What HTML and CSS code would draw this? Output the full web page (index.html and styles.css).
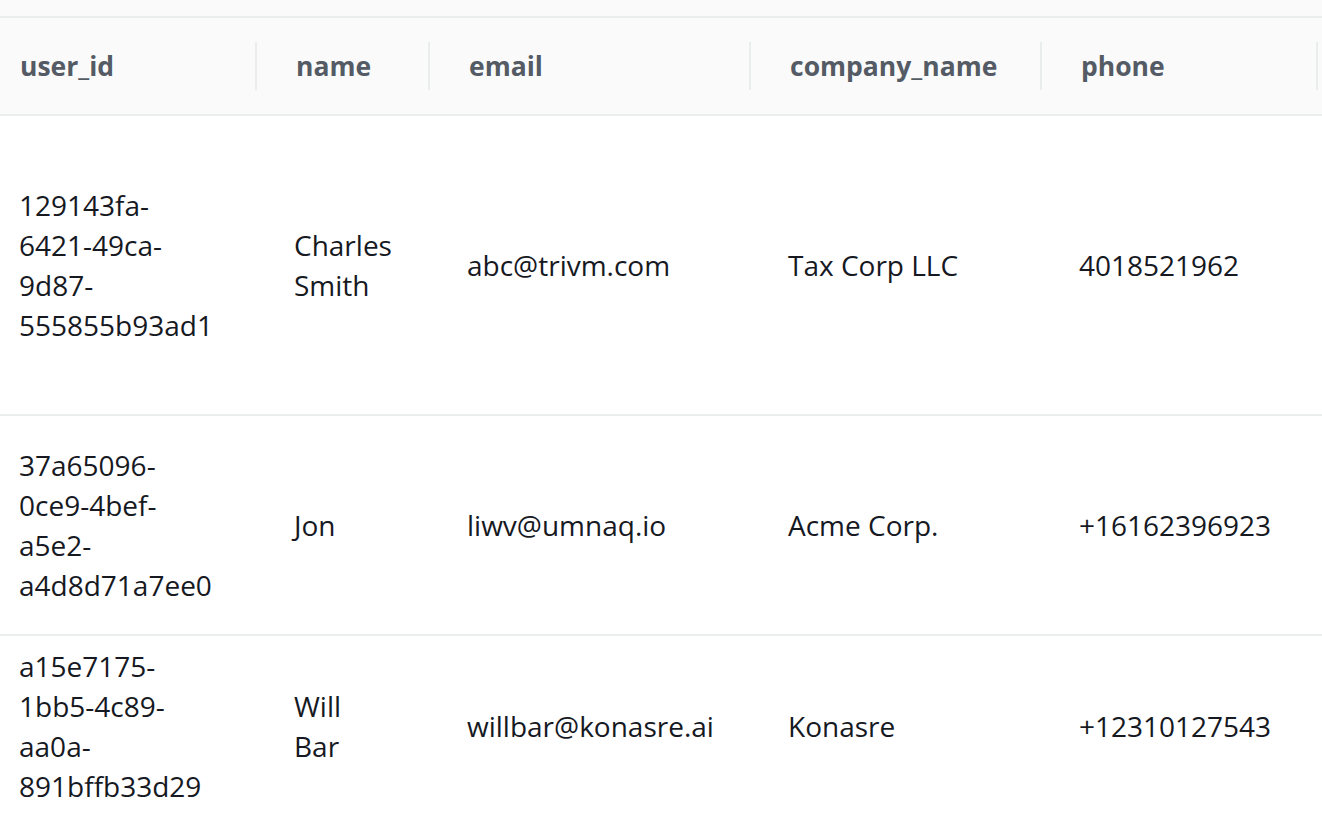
FILE: index.html
```html
<!DOCTYPE html>
<html lang="en">
<head>
<meta charset="utf-8">
<title>Users table</title>
<link rel="stylesheet" href="styles.css">
</head>
<body>
<div class="table-wrap">
  <div class="top-strip"></div>
  <div class="row head">
    <div class="th first"><span>user_id</span></div>
    <div class="th"><span>name</span></div>
    <div class="th"><span>email</span></div>
    <div class="th"><span>company_name</span></div>
    <div class="th"><span>phone</span></div>
    <div class="th"><span></span></div>
  </div>
  <div class="row body r1">
    <div class="td first"><span class="id">129143fa-6421-49ca-9d87-555855b93ad1</span></div>
    <div class="td"><span class="nm">Charles Smith</span></div>
    <div class="td">abc@trivm.com</div>
    <div class="td">Tax Corp LLC</div>
    <div class="td">4018521962</div>
    <div class="td"></div>
  </div>
  <div class="row body r2">
    <div class="td first"><span class="id">37a65096-0ce9-4bef-a5e2-a4d8d71a7ee0</span></div>
    <div class="td"><span class="nm">Jon</span></div>
    <div class="td">liwv@umnaq.io</div>
    <div class="td">Acme Corp.</div>
    <div class="td">+16162396923</div>
    <div class="td"></div>
  </div>
  <div class="row body r3">
    <div class="td first"><span class="id">a15e7175-1bb5-4c89-aa0a-891bffb33d29</span></div>
    <div class="td"><span class="nm">Will Bar</span></div>
    <div class="td">willbar@konasre.ai</div>
    <div class="td">Konasre</div>
    <div class="td">+12310127543</div>
    <div class="td"></div>
  </div>
</div>
</body>
</html>
```

FILE: styles.css
```css
html, body {
  margin: 0;
  padding: 0;
  background: #ffffff;
  overflow: hidden;
}

.table-wrap {
  width: 1322px;
  font-family: "Open Sans", "Noto Sans", sans-serif;
}

.top-strip {
  height: 16px;
  background: #fafafa;
  border-bottom: 2px solid #eaeded;
}

.row {
  display: grid;
  grid-template-columns: 255px 173px 321px 291px 276px 1fr;
  align-items: center;
  border-bottom: 2px solid #eaeded;
}

.head {
  height: 96px;
  background: #fafafa;
}

.th {
  height: 48px;
  display: flex;
  align-items: center;
  border-left: 2px solid #eaeded;
  padding-left: 39px;
  font-size: 26.5px;
  font-weight: 700;
  color: #545b64;
  white-space: nowrap;
}

.th.first {
  border-left: none;
  padding-left: 20px;
}

.body {
  font-size: 28px;
  line-height: 40px;
  color: #16191f;
}

.r1 { height: 298px; }
.r2 { height: 218px; }
.r3 { height: 180px; border-bottom: none; }

.td {
  padding-left: 39px;
  white-space: nowrap;
}

.td.first {
  padding-left: 19px;
  white-space: normal;
}

.id {
  display: block;
  width: 160px;
}

.nm {
  display: block;
  width: 92px;
  white-space: normal;
}
```
